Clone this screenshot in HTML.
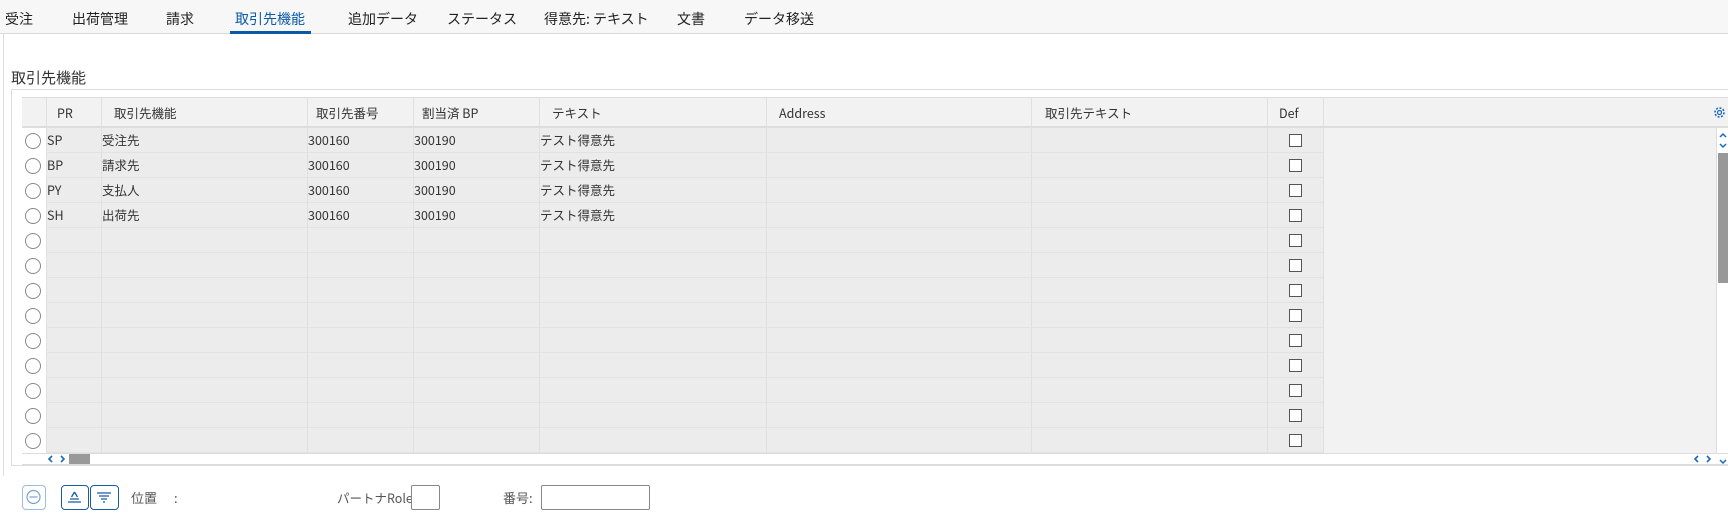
<!DOCTYPE html>
<html><head><meta charset="utf-8"><style>
*{box-sizing:border-box;margin:0;padding:0}
body{width:1728px;height:523px;background:#fff;font-family:"Noto Sans CJK JP","Liberation Sans",sans-serif;color:#333;position:relative;overflow:hidden}
.abs{position:absolute}
.tabs{position:absolute;left:0;top:0;width:1728px;height:34px;background:#f7f7f7;border-bottom:1px solid #d9d9d9}
.tab{position:absolute;top:0;line-height:38px;font-size:14px;color:#222;white-space:nowrap}
.tab.sel{color:#0a5aa8}
.ul{position:absolute;left:230px;top:31px;width:81px;height:3px;background:#0a5aa8}
.panel{position:absolute;left:3px;top:34px;width:1725px;height:442px;border-left:1px solid #ddd}
.title{position:absolute;left:11px;top:66px;line-height:24px;font-size:15px;color:#333}
.box{position:absolute;left:11px;top:89px;width:1717px;height:377px;border:1px solid #ddd;border-right:none}
.hdr{position:absolute;top:97px;height:31px;background:#f2f2f2;border-top:1px solid #ddd;border-bottom:2px solid #ddd}
.cell{position:absolute;font-size:12.5px;color:#333;white-space:nowrap;line-height:24px}
.hc{top:98px;line-height:30px}
.vl{position:absolute;width:1px;background:#e0e0e0}
.hl{position:absolute;height:1px;background:#e2e2e2}
.rad{position:absolute;left:25px;width:16px;height:16px;border:1.5px solid #888;border-radius:50%;background:#fff}
.chk{position:absolute;left:1289px;width:13px;height:13px;border:1px solid #555;background:#fff}
.btn{position:absolute;top:485px;height:25px;border:1.5px solid #1a5aa0;border-radius:4px;background:#fff}
.inp{position:absolute;top:485px;height:25px;border:1px solid #888;border-radius:2px;background:#fff}
.lbl{position:absolute;top:485px;line-height:25px;font-size:13px;color:#555}
</style></head><body>
<div class="tabs">
<span class="tab" style="left:5px">受注</span>
<span class="tab" style="left:72px">出荷管理</span>
<span class="tab" style="left:166px">請求</span>
<span class="tab sel" style="left:235px">取引先機能</span>
<span class="tab" style="left:348px">追加データ</span>
<span class="tab" style="left:447px">ステータス</span>
<span class="tab" style="left:544px">得意先: テキスト</span>
<span class="tab" style="left:677px">文書</span>
<span class="tab" style="left:744px">データ移送</span>
<div class="ul"></div>
</div>
<div class="panel"></div>
<div class="title">取引先機能</div>
<div class="box"></div>
<div class="abs" style="left:46px;top:128px;width:1277px;height:325px;background:#ececec"></div>
<div class="abs" style="left:1323px;top:128px;width:394px;height:325px;background:#f2f2f2"></div>
<div class="abs" style="left:22px;top:128px;width:24px;height:325px;background:#fff"></div>
<div class="hdr" style="left:22px;width:1706px"></div>
<div class="cell hc" style="left:57px">PR</div>
<div class="cell hc" style="left:114px">取引先機能</div>
<div class="cell hc" style="left:316px">取引先番号</div>
<div class="cell hc" style="left:422px">割当済 BP</div>
<div class="cell hc" style="left:552px">テキスト</div>
<div class="cell hc" style="left:779px">Address</div>
<div class="cell hc" style="left:1045px">取引先テキスト</div>
<div class="cell hc" style="left:1279px">Def</div>
<svg class="abs" style="left:1713px;top:106px" width="13" height="13" viewBox="0 0 13 13"><circle cx="6.5" cy="6.5" r="4.5" fill="none" stroke="#1a6ac0" stroke-width="1.6" stroke-dasharray="2 1.5"/><circle cx="6.5" cy="6.5" r="2" fill="none" stroke="#1a6ac0" stroke-width="1.2"/></svg>
<div class="vl" style="left:46px;top:97px;height:356px"></div>
<div class="vl" style="left:101px;top:97px;height:356px"></div>
<div class="vl" style="left:307px;top:97px;height:356px"></div>
<div class="vl" style="left:413px;top:97px;height:356px"></div>
<div class="vl" style="left:539px;top:97px;height:356px"></div>
<div class="vl" style="left:766px;top:97px;height:356px"></div>
<div class="vl" style="left:1031px;top:97px;height:356px"></div>
<div class="vl" style="left:1267px;top:97px;height:356px"></div>
<div class="vl" style="left:1323px;top:97px;height:356px"></div>
<div id="rows"></div>
<script>
var d=[["SP","受注先"],["BP","請求先"],["PY","支払人"],["SH","出荷先"]];var h="";
for(var i=0;i<13;i++){var y=128+i*25;
h+='<div class="hl" style="left:46px;top:'+(y+24)+'px;width:1277px"></div>';
h+='<div class="rad" style="top:'+(y+5)+'px"></div>';
h+='<div class="chk" style="top:'+(y+6)+'px"></div>';
if(i<4){h+='<div class="cell" style="left:47px;top:'+y+'px">'+d[i][0]+'</div><div class="cell" style="left:102px;top:'+y+'px">'+d[i][1]+'</div><div class="cell" style="left:308px;top:'+y+'px">300160</div><div class="cell" style="left:414px;top:'+y+'px">300190</div><div class="cell" style="left:540px;top:'+y+'px">テスト得意先</div>';}
}
document.getElementById("rows").innerHTML=h;
</script>
<div class="abs" style="left:1716px;top:128px;width:1px;height:337px;background:#ddd"></div>
<svg class="abs" style="left:1718px;top:131px" width="10" height="20" viewBox="0 0 10 20"><path d="M2 6 L5 3 L8 6 M2 13 L5 16 L8 13" stroke="#1a6ac0" stroke-width="1.5" fill="none"/></svg>
<div class="abs" style="left:1718px;top:153px;width:10px;height:130px;background:#999"></div>
<div class="abs" style="left:22px;top:453px;width:1706px;height:12px;background:#fff;border-top:1px solid #ddd;border-bottom:1px solid #ddd"></div>
<svg class="abs" style="left:47px;top:454px" width="20" height="10" viewBox="0 0 20 10"><path d="M5 2 L2 5 L5 8 M14 2 L17 5 L14 8" stroke="#1a6ac0" stroke-width="1.6" fill="none"/></svg>
<div class="abs" style="left:69px;top:454px;width:21px;height:10px;background:#999"></div>
<svg class="abs" style="left:1693px;top:454px" width="20" height="10" viewBox="0 0 20 10"><path d="M5 2 L2 5 L5 8 M14 2 L17 5 L14 8" stroke="#1a6ac0" stroke-width="1.6" fill="none"/></svg>
<svg class="abs" style="left:1718px;top:452px" width="10" height="12" viewBox="0 0 10 12"><path d="M2 8 L5 11 L8 8" stroke="#1a6ac0" stroke-width="1.5" fill="none"/></svg>
<div class="btn" style="left:22px;width:24px;border-color:#9bbbe0"><svg width="21" height="22" viewBox="0 0 21 22"><circle cx="10.5" cy="11" r="6.5" fill="none" stroke="#7aa0d0" stroke-width="1.2"/><line x1="6.5" y1="11" x2="14.5" y2="11" stroke="#7aa0d0" stroke-width="1.2"/></svg></div>
<div class="btn" style="left:61px;width:28px"><svg width="25" height="22" viewBox="0 0 25 22"><path d="M12.5 6 L9.5 11 M12.5 6 L15.5 11 M8 13h9 M6 16h13" stroke="#1a5aa0" stroke-width="1.3" fill="none"/></svg></div>
<div class="btn" style="left:90px;width:29px"><svg width="26" height="22" viewBox="0 0 26 22"><path d="M6 7h14 M8 10h10 M10 13h6 M12 16h2" stroke="#1a5aa0" stroke-width="1.3" fill="none"/></svg></div>
<div class="lbl" style="left:131px">位置</div>
<div class="lbl" style="left:174px">:</div>
<div class="lbl" style="left:337px;font-size:12.5px">パートナRole</div>
<div class="inp" style="left:411px;width:29px"></div>
<div class="lbl" style="left:503px">番号:</div>
<div class="inp" style="left:541px;width:109px"></div>
</body></html>
